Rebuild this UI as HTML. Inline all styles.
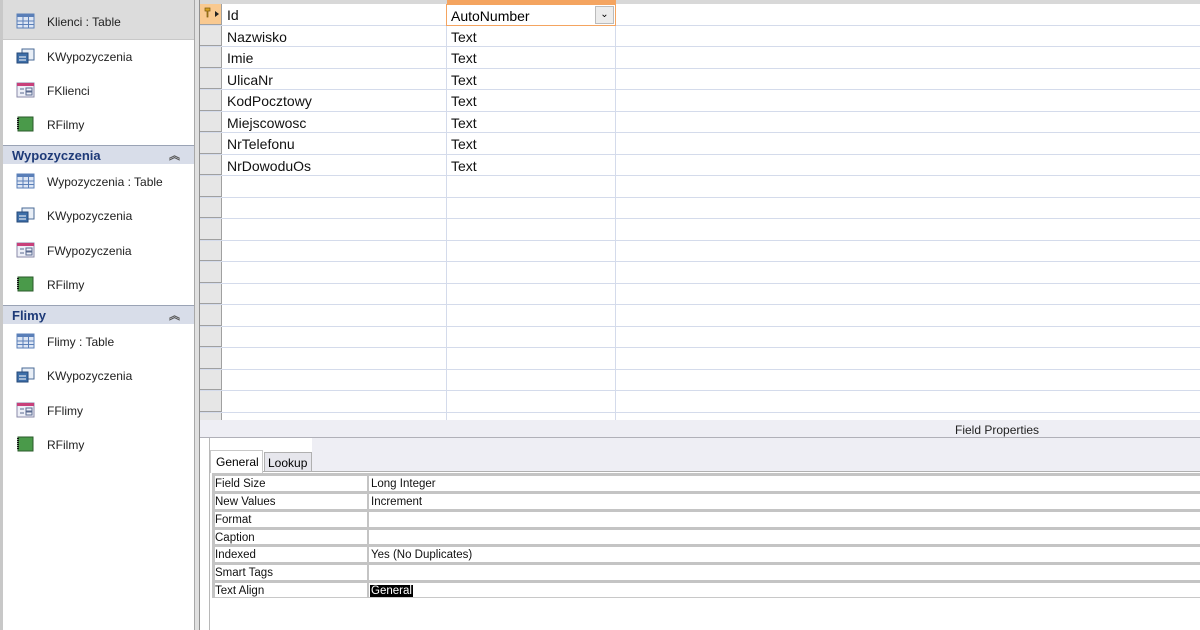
<!DOCTYPE html>
<html><head><meta charset="utf-8"><style>
*{margin:0;padding:0;box-sizing:border-box}
body{width:1200px;height:630px;overflow:hidden;background:#fff;font-family:"Liberation Sans",sans-serif;position:relative}
.a{position:absolute}
.nav{left:0;top:0;width:195px;height:630px;background:#fff;border-left:3px solid #c8c8c8;border-right:1px solid #a8a8a8}
.item{position:absolute;left:3px;width:191px;height:34px;font-size:12px;color:#222}
.item span{position:absolute;left:44px;top:10px}
.item i{position:absolute;left:13px;top:8px;width:19px;height:16px}
.grp{position:absolute;left:3px;width:191px;height:19px;background:#d8dde9;border-top:1px solid #9aa3b5;font-weight:bold;color:#1e3a78;font-size:13px;padding:2px 0 0 9px}
.grp b{position:absolute;right:14px;top:1px;color:#555;font-size:11px}
.row{position:absolute;left:200px;width:1000px;height:21.5px;border-bottom:1px solid #d4dbeb}
.sel{position:absolute;left:0;top:0;width:22px;height:100%;background:#e6e6e6;border-right:1px solid #a0a0a0;border-bottom:1px solid #a0a0a0}
.c1{position:absolute;left:27px;top:3px;font-size:14px;color:#111}
.c2{position:absolute;left:251px;top:3px;font-size:14px;color:#111}
.pr{position:absolute;left:212px;width:988px;height:17.7px;border-top:3px solid #c4c4c4;font-size:11.5px;color:#111}
.pr span{position:absolute;top:2px;left:3px}
.pr em{font-style:normal;position:absolute;top:2px;left:159px}
</style></head><body>
<div class="a nav"></div>
<div class="a" style="left:3px;top:0;width:191px;height:40px;background:#dcdcdc;border-bottom:1px solid #c8c8c8"></div>
<div class="a" style="left:195px;top:0;width:5px;height:630px;background:#e0e0e0;border-right:1px solid #909090"></div>

<div class="item" style="top:5px"><i><svg width="19" height="16"><rect x="1" y="1" width="17" height="14" fill="#dde6f4" stroke="#5a7fb8"/><rect x="1" y="1" width="17" height="3" fill="#5a7fb8"/><path d="M1 8h17M1 11.5h17M7 4v11M12.5 4v11" stroke="#5a7fb8"/></svg></i><span>Klienci : Table</span></div>
<div class="item" style="top:40px"><i><svg width="19" height="16"><rect x="6" y="1" width="12" height="11" fill="#e8eef6" stroke="#4a6a95"/><rect x="1" y="5" width="11" height="10" fill="#3d6ea8" stroke="#264a7a"/><path d="M3 9h7M3 12h7" stroke="#fff"/></svg></i><span>KWypozyczenia</span></div>
<div class="item" style="top:74px"><i><svg width="19" height="16"><rect x="1" y="1" width="17" height="14" fill="#eef0f8" stroke="#8a8aa8"/><rect x="1" y="1" width="17" height="3" fill="#c8407a"/><path d="M4 7h4M4 11h4M10 6h6v3h-6zM10 10h6v3h-6z" stroke="#5a6a90" fill="none"/></svg></i><span>FKlienci</span></div>
<div class="item" style="top:108px"><i><svg width="19" height="16"><rect x="2" y="1" width="15" height="14" fill="#4a9a4a" stroke="#2a5a2a"/><path d="M2 2v12" stroke="#111" stroke-width="2" stroke-dasharray="1 1"/></svg></i><span>RFilmy</span></div>

<div class="grp" style="top:145px">Wypozyczenia<b>︽</b></div>
<div class="item" style="top:165px"><i><svg width="19" height="16"><rect x="1" y="1" width="17" height="14" fill="#dde6f4" stroke="#5a7fb8"/><rect x="1" y="1" width="17" height="3" fill="#5a7fb8"/><path d="M1 8h17M1 11.5h17M7 4v11M12.5 4v11" stroke="#5a7fb8"/></svg></i><span>Wypozyczenia : Table</span></div>
<div class="item" style="top:199px"><i><svg width="19" height="16"><rect x="6" y="1" width="12" height="11" fill="#e8eef6" stroke="#4a6a95"/><rect x="1" y="5" width="11" height="10" fill="#3d6ea8" stroke="#264a7a"/><path d="M3 9h7M3 12h7" stroke="#fff"/></svg></i><span>KWypozyczenia</span></div>
<div class="item" style="top:234px"><i><svg width="19" height="16"><rect x="1" y="1" width="17" height="14" fill="#eef0f8" stroke="#8a8aa8"/><rect x="1" y="1" width="17" height="3" fill="#c8407a"/><path d="M4 7h4M4 11h4M10 6h6v3h-6zM10 10h6v3h-6z" stroke="#5a6a90" fill="none"/></svg></i><span>FWypozyczenia</span></div>
<div class="item" style="top:268px"><i><svg width="19" height="16"><rect x="2" y="1" width="15" height="14" fill="#4a9a4a" stroke="#2a5a2a"/><path d="M2 2v12" stroke="#111" stroke-width="2" stroke-dasharray="1 1"/></svg></i><span>RFilmy</span></div>

<div class="grp" style="top:305px">Flimy<b>︽</b></div>
<div class="item" style="top:325px"><i><svg width="19" height="16"><rect x="1" y="1" width="17" height="14" fill="#dde6f4" stroke="#5a7fb8"/><rect x="1" y="1" width="17" height="3" fill="#5a7fb8"/><path d="M1 8h17M1 11.5h17M7 4v11M12.5 4v11" stroke="#5a7fb8"/></svg></i><span>Flimy : Table</span></div>
<div class="item" style="top:359px"><i><svg width="19" height="16"><rect x="6" y="1" width="12" height="11" fill="#e8eef6" stroke="#4a6a95"/><rect x="1" y="5" width="11" height="10" fill="#3d6ea8" stroke="#264a7a"/><path d="M3 9h7M3 12h7" stroke="#fff"/></svg></i><span>KWypozyczenia</span></div>
<div class="item" style="top:394px"><i><svg width="19" height="16"><rect x="1" y="1" width="17" height="14" fill="#eef0f8" stroke="#8a8aa8"/><rect x="1" y="1" width="17" height="3" fill="#c8407a"/><path d="M4 7h4M4 11h4M10 6h6v3h-6zM10 10h6v3h-6z" stroke="#5a6a90" fill="none"/></svg></i><span>FFlimy</span></div>
<div class="item" style="top:428px"><i><svg width="19" height="16"><rect x="2" y="1" width="15" height="14" fill="#4a9a4a" stroke="#2a5a2a"/><path d="M2 2v12" stroke="#111" stroke-width="2" stroke-dasharray="1 1"/></svg></i><span>RFilmy</span></div>

<!-- grid -->
<div class="a" style="left:200px;top:0;width:1000px;height:4px;background:#d8d8d8"></div>
<div class="a" style="left:447px;top:0;width:169px;height:4px;background:#f4a460"></div>
<div class="a" style="left:200px;top:4px;width:1000px;height:416px;overflow:hidden">
<div style="position:absolute;left:246px;top:0;width:1px;height:416px;background:#d4dbeb"></div>
<div style="position:absolute;left:415px;top:0;width:1px;height:416px;background:#d4dbeb"></div>
</div>
<div class="row" style="top:4px"><div class="sel" style="background:#f9c990"><svg width="20" height="20" style="position:absolute;left:2px;top:1px"><path d="M3 3h5v3H6v6H5V6H3z" fill="#d8a020" stroke="#7a5a10" stroke-width=".7"/><path d="M13 6l4 3-4 3z" fill="#222"/></svg></div><div class="c1">Id</div><div style="position:absolute;left:246px;top:0;width:170px;height:22px;border:1px solid #f4a460;background:#fff"><span style="position:absolute;left:4px;top:3px;font-size:14px">AutoNumber</span><div style="position:absolute;right:1px;top:1px;width:19px;height:18px;background:#ececec;border:1px solid #bbb;text-align:center;font-size:10px;line-height:16px">&#8964;</div></div></div>
<div class="row" style="top:25.5px"><div class="sel"></div><div class="c1">Nazwisko</div><div class="c2">Text</div></div>
<div class="row" style="top:47px"><div class="sel"></div><div class="c1">Imie</div><div class="c2">Text</div></div>
<div class="row" style="top:68.5px"><div class="sel"></div><div class="c1">UlicaNr</div><div class="c2">Text</div></div>
<div class="row" style="top:90px"><div class="sel"></div><div class="c1">KodPocztowy</div><div class="c2">Text</div></div>
<div class="row" style="top:111.5px"><div class="sel"></div><div class="c1">Miejscowosc</div><div class="c2">Text</div></div>
<div class="row" style="top:133px"><div class="sel"></div><div class="c1">NrTelefonu</div><div class="c2">Text</div></div>
<div class="row" style="top:154.5px"><div class="sel"></div><div class="c1">NrDowoduOs</div><div class="c2">Text</div></div>
<div class="row" style="top:176px"><div class="sel"></div></div>
<div class="row" style="top:197.5px"><div class="sel"></div></div>
<div class="row" style="top:219px"><div class="sel"></div></div>
<div class="row" style="top:240.5px"><div class="sel"></div></div>
<div class="row" style="top:262px"><div class="sel"></div></div>
<div class="row" style="top:283.5px"><div class="sel"></div></div>
<div class="row" style="top:305px"><div class="sel"></div></div>
<div class="row" style="top:326.5px"><div class="sel"></div></div>
<div class="row" style="top:348px"><div class="sel"></div></div>
<div class="row" style="top:369.5px"><div class="sel"></div></div>
<div class="row" style="top:391px"><div class="sel"></div></div>
<div class="row" style="top:412.5px;height:8px;border:none"><div class="sel" style="border-bottom:none"></div></div>

<!-- bottom -->
<div class="a" style="left:200px;top:420px;width:1000px;height:18px;background:#eeeef4;border-bottom:1px solid #b0b0b8"><span style="position:absolute;left:755px;top:3px;font-size:12px;color:#222">Field Properties</span></div>
<div class="a" style="left:200px;top:438px;width:1000px;height:192px;background:#fff"></div>
<div class="a" style="left:312px;top:438px;width:888px;height:34px;background:#eeeef4"></div>
<div class="a" style="left:209px;top:438px;width:1px;height:192px;background:#b8b8b8"></div>
<div class="a" style="left:210px;top:450px;width:53px;height:23px;background:#fff;border:1px solid #c8c8c8;border-bottom:none;font-size:12px;padding:4px 0 0 5px">General</div>
<div class="a" style="left:264px;top:452px;width:48px;height:20px;background:#e6e6ec;border:1px solid #b0b0b0;font-size:12px;padding:3px 0 0 3px">Lookup</div>
<div class="a" style="left:263px;top:471px;width:937px;height:1px;background:#b0b0b0"></div>
<div class="pr" style="top:473px"><span>Field Size</span><em>Long Integer</em></div>
<div class="pr" style="top:491px"><span>New Values</span><em>Increment</em></div>
<div class="pr" style="top:509px"><span>Format</span></div>
<div class="pr" style="top:526.5px"><span>Caption</span></div>
<div class="pr" style="top:544px"><span>Indexed</span><em>Yes (No Duplicates)</em></div>
<div class="pr" style="top:562px"><span>Smart Tags</span></div>
<div class="pr" style="top:580px;border-bottom:1px solid #c8c8c8"><span>Text Align</span><em style="background:#000;color:#fff;padding:0 1px;left:158px">General</em></div>
<div class="a" style="left:212px;top:473px;width:3px;height:125px;background:#c4c4c4"></div>
<div class="a" style="left:367px;top:473px;width:2px;height:125px;background:#c4c4c4"></div>
</body></html>
